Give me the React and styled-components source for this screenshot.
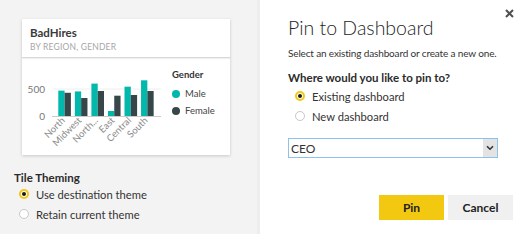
import React, { useState } from "react";
import styled, { createGlobalStyle, css } from "styled-components";

const GlobalStyle = createGlobalStyle`
  html, body {
    margin: 0;
    padding: 0;
    background: #ffffff;
  }
  body {
    font-family: "Lato", "Open Sans", sans-serif;
    color: #333333;
  }
`;

const Page = styled.div`
  display: flex;
  width: 524px;
  height: 234px;
  overflow: hidden;
`;

const PreviewPane = styled.div`
  width: 260px;
  flex: none;
  background: #f3f3f3;
  box-shadow: inset -3px 0 0 #eeeeee;
  padding: 19px 0 0 0;
  box-sizing: border-box;
`;

const Tile = styled.div`
  margin-left: 22px;
  width: 208px;
  height: 136px;
  background: #ffffff;
  box-shadow: 0 1px 3px rgba(0, 0, 0, 0.18);
  display: flex;
  flex-direction: column;
`;

const TileHeader = styled.div`
  height: 39px;
  box-sizing: border-box;
  padding: 6px 0 0 8px;
  border-bottom: 1px solid #d8d8d8;
  box-shadow: 0 1px 1px rgba(0, 0, 0, 0.06);
`;

const TileTitle = styled.div`
  font-size: 11.5px;
  font-weight: 700;
  color: #3a3a3a;
  line-height: 15px;
`;

const TileSubtitle = styled.div`
  font-size: 8.5px;
  color: #a6a6a6;
  line-height: 13px;
  margin-top: 1px;
  letter-spacing: 0.2px;
`;

const TileBody = styled.div`
  flex: 1;
  display: flex;
`;

const Legend = styled.div`
  padding: 10px 0 0 10px;
  display: flex;
  flex-direction: column;
`;

const LegendTitle = styled.div`
  font-size: 9.5px;
  font-weight: 700;
  color: #333;
  line-height: 14px;
  margin-bottom: 4px;
`;

const LegendItem = styled.div`
  display: flex;
  align-items: center;
  gap: 5px;
  font-size: 9.5px;
  color: #444;
  line-height: 16.5px;
`;

const Dot = styled.span`
  width: 8px;
  height: 8px;
  border-radius: 50%;
  background: ${(p) => p.color};
`;

const Theming = styled.div`
  padding: 17px 0 0 14px;
`;

const SectionLabel = styled.div`
  font-size: ${(p) => p.size || 11}px;
  font-weight: 700;
  color: #2b2b2b;
  line-height: ${(p) => p.lh || 15}px;
  white-space: nowrap;
`;

const RadioGroup = styled.div`
  display: flex;
  flex-direction: column;
  padding-left: ${(p) => p.indent}px;
`;

const RadioRow = styled.label`
  display: flex;
  align-items: center;
  height: ${(p) => p.h}px;
  font-size: ${(p) => p.size}px;
  color: #333;
  cursor: pointer;
`;

const RadioMark = styled.span`
  width: 8px;
  height: 8px;
  border-radius: 50%;
  border: 1px solid #c8c8c8;
  background: #fff;
  margin-right: 7px;
  display: flex;
  align-items: center;
  justify-content: center;
  flex: none;
  ${(p) =>
    p.checked &&
    css`
      border: 2px solid #f2c811;
      width: 6px;
      height: 6px;
      &::after {
        content: "";
        width: 4px;
        height: 4px;
        border-radius: 50%;
        background: #1a1a1a;
      }
    `}
`;

const DialogPane = styled.div`
  flex: 1;
  position: relative;
  padding: 13px 11px 0 28px;
  display: flex;
  flex-direction: column;
`;

const CloseButton = styled.button`
  position: absolute;
  top: 7px;
  right: 9px;
  width: 12px;
  height: 12px;
  padding: 0;
  border: none;
  background: none;
  display: flex;
  align-items: center;
  justify-content: center;
  cursor: pointer;
`;

const DialogTitle = styled.h1`
  margin: 0;
  font-size: 19.5px;
  font-weight: 300;
  color: #252525;
  line-height: 30px;
  white-space: nowrap;
`;

const DialogText = styled.p`
  margin: 3px 0 0 0;
  font-size: 10px;
  color: #333;
  line-height: 14px;
  letter-spacing: -0.15px;
  white-space: nowrap;
`;

const Question = styled(SectionLabel)`
  margin-top: 10px;
`;

const SelectBox = styled.div`
  margin-top: 12px;
  width: 210px;
  height: 20px;
  box-sizing: border-box;
  border: 1px solid #8ec2e8;
  display: flex;
  align-items: stretch;
  font-size: 12px;
  color: #333;
`;

const SelectValue = styled.div`
  flex: 1;
  padding-left: 2px;
  display: flex;
  align-items: center;
`;

const SelectArrow = styled.div`
  width: 14px;
  background: #e3e3e3;
  display: flex;
  align-items: center;
  justify-content: center;
`;

const Actions = styled.div`
  margin-top: 37px;
  display: flex;
  justify-content: flex-end;
  gap: 4px;
`;

const Button = styled.button`
  width: 65px;
  height: 25px;
  border: none;
  font-family: inherit;
  font-size: 12px;
  font-weight: 700;
  color: #222;
  background: ${(p) => (p.primary ? "#f2c811" : "#f0f0f0")};
  cursor: pointer;
`;

const regions = [
  { name: "North", male: 470, female: 430 },
  { name: "Midwest", male: 455, female: 333 },
  { name: "North...", male: 600, female: 463 },
  { name: "East", male: 93, female: 376 },
  { name: "Central", male: 543, female: 389 },
  { name: "South", male: 661, female: 463 },
];

function BarChart() {
  const base = 58;
  const scale = 27 / 500;
  const barW = 6.3;
  return (
    <svg width="140" height="96" viewBox="0 0 140 96">
      <line x1="31" y1="31" x2="139" y2="31" stroke="#eeeeee" strokeWidth="1" />
      <text x="23" y="34.5" fontSize="10" fill="#777" textAnchor="end" fontFamily="Lato">500</text>
      <text x="23" y="61.5" fontSize="10" fill="#777" textAnchor="end" fontFamily="Lato">0</text>
      {regions.map((r, i) => {
        const x = 36.3 + i * 16.55;
        const mh = r.male * scale;
        const fh = r.female * scale;
        const lx = x + barW + 1;
        const ly = base + 5;
        return (
          <g key={r.name}>
            <rect x={x} y={base - mh} width={barW} height={mh} fill="#01b8aa" />
            <rect x={x + barW} y={base - fh} width={barW} height={fh} fill="#374649" />
            <text
              x={lx}
              y={ly}
              fontSize="9.5"
              fill="#8a8a8a"
              textAnchor="end"
              fontFamily="Lato"
              transform={`rotate(-45 ${lx} ${ly})`}
            >
              {r.name}
            </text>
          </g>
        );
      })}
      <line x1="30" y1="58.5" x2="139" y2="58.5" stroke="#cccccc" strokeWidth="1" />
    </svg>
  );
}

function Radio({ checked, label, h, size, onSelect }) {
  return (
    <RadioRow h={h} size={size} onClick={onSelect}>
      <RadioMark checked={checked} />
      {label}
    </RadioRow>
  );
}

export default function App() {
  const [theme, setTheme] = useState("destination");
  const [target, setTarget] = useState("existing");

  return (
    <Page>
      <GlobalStyle />
      <PreviewPane>
        <Tile>
          <TileHeader>
            <TileTitle>BadHires</TileTitle>
            <TileSubtitle>BY REGION, GENDER</TileSubtitle>
          </TileHeader>
          <TileBody>
            <BarChart />
            <Legend>
              <LegendTitle>Gender</LegendTitle>
              <LegendItem>
                <Dot color="#01b8aa" />
                Male
              </LegendItem>
              <LegendItem>
                <Dot color="#374649" />
                Female
              </LegendItem>
            </Legend>
          </TileBody>
        </Tile>
        <Theming>
          <SectionLabel size={11.5} lh={12}>Tile Theming</SectionLabel>
          <RadioGroup indent={5}>
            <Radio
              h={20}
              size={11.2}
              label="Use destination theme"
              checked={theme === "destination"}
              onSelect={() => setTheme("destination")}
            />
            <Radio
              h={20}
              size={11.2}
              label="Retain current theme"
              checked={theme === "current"}
              onSelect={() => setTheme("current")}
            />
          </RadioGroup>
        </Theming>
      </PreviewPane>

      <DialogPane>
        <CloseButton aria-label="Close">
          <svg width="9" height="9" viewBox="0 0 9 9">
            <path d="M1 1 L8 8 M8 1 L1 8" stroke="#505050" strokeWidth="2" />
          </svg>
        </CloseButton>
        <DialogTitle>Pin to Dashboard</DialogTitle>
        <DialogText>Select an existing dashboard or create a new one.</DialogText>
        <Question size={11.5} lh={16}>Where would you like to pin to?</Question>
        <RadioGroup indent={7}>
          <Radio
            h={20}
            size={11.2}
            label="Existing dashboard"
            checked={target === "existing"}
            onSelect={() => setTarget("existing")}
          />
          <Radio
            h={20}
            size={11.2}
            label="New dashboard"
            checked={target === "new"}
            onSelect={() => setTarget("new")}
          />
        </RadioGroup>
        <SelectBox>
          <SelectValue>CEO</SelectValue>
          <SelectArrow>
            <svg width="8" height="6" viewBox="0 0 8 6">
              <path d="M1 1.2 L4 4.2 L7 1.2" fill="none" stroke="#333" strokeWidth="1.6" />
            </svg>
          </SelectArrow>
        </SelectBox>
        <Actions>
          <Button primary>Pin</Button>
          <Button>Cancel</Button>
        </Actions>
      </DialogPane>
    </Page>
  );
}
